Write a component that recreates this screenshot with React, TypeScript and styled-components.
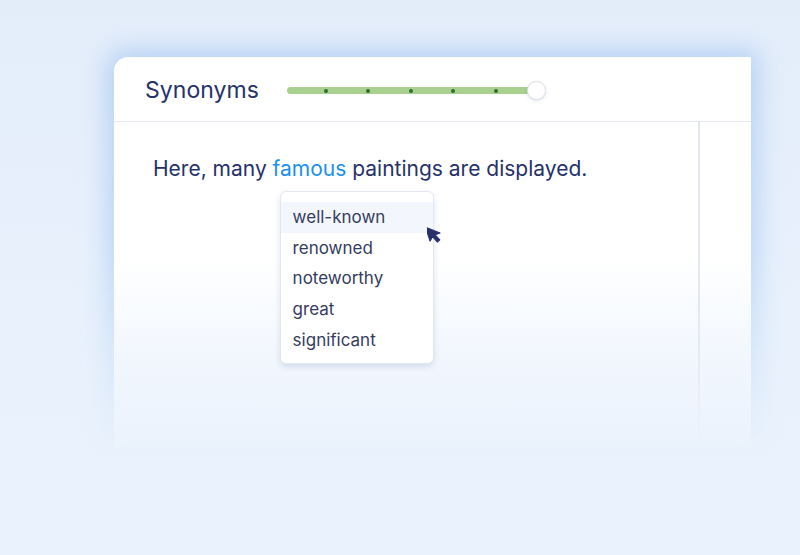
import React from "react";
import styled, { createGlobalStyle } from "styled-components";

const Global = createGlobalStyle`
  html, body { margin: 0; padding: 0; }
  body {
    background: linear-gradient(180deg, #e3edfa 0%, #e8f1fc 55%, #eaf3fd 100%);
    font-family: Inter, "Noto Sans", sans-serif;
    width: 800px;
    height: 555px;
    overflow: hidden;
  }
`;

const Page = styled.div`
  width: 800px;
  height: 555px;
  padding: 57px 0 0 114px;
  box-sizing: border-box;
`;

const Card = styled.div`
  position: relative;
  width: 637px;
  height: 390px;
  border-radius: 14px 1px 0 0;
  background: linear-gradient(180deg, #ffffff 0px, #ffffff 200px, #f2f7fe 300px, #eaf2fc 390px);
  display: flex;
  flex-direction: column;
  &::before {
    content: "";
    position: absolute;
    inset: -7px -7px 0 -7px;
    border-radius: 20px 6px 0 0;
    background: linear-gradient(
      180deg,
      rgba(165, 198, 242, 0.75) 0%,
      rgba(170, 202, 243, 0.7) 50%,
      rgba(200, 220, 248, 0) 100%
    );
    filter: blur(12px);
    pointer-events: none;
    z-index: -1;
  }
`;

const Header = styled.div`
  height: 65px;
  box-sizing: border-box;
  border-bottom: 1.5px solid #e4e7ef;
  display: flex;
  align-items: center;
  padding-left: 31px;
  gap: 28px;
`;

const Title = styled.h1`
  margin: 0;
  font-size: 23px;
  font-weight: 400;
  color: #26326a;
  letter-spacing: 0.05px;
  position: relative;
  top: 1px;
`;

const Track = styled.div`
  position: relative;
  width: 250px;
  height: 7px;
  border-radius: 4px;
  background: #a9d08e;
  display: flex;
  align-items: center;
  gap: 38.5px;
  padding-left: 37px;
  box-sizing: border-box;
  margin-top: 3px;
`;

const Dot = styled.span`
  flex: none;
  width: 4px;
  height: 4px;
  border-radius: 50%;
  background: #2c6e38;
`;

const Knob = styled.span`
  position: absolute;
  right: -9px;
  top: -6px;
  width: 19px;
  height: 19px;
  border-radius: 50%;
  background: #fff;
  border: 1px solid #dfe3ea;
  box-sizing: border-box;
  box-shadow: 0 1px 3px rgba(60, 80, 120, 0.18);
`;

const Body = styled.div`
  flex: 1;
  display: flex;
`;

const Main = styled.div`
  width: 586px;
  padding: 34px 0 0 39px;
  box-sizing: border-box;
  border-right: 2px solid;
  border-image: linear-gradient(180deg, #e2e6ee 0%, #e5e9f2 70%, rgba(230, 236, 245, 0) 100%) 1;
`;

const Side = styled.div`
  flex: 1;
`;

const Sentence = styled.p`
  margin: 0;
  font-size: 21px;
  line-height: 26px;
  color: #26326a;
`;

const Highlight = styled.span`
  position: relative;
  color: #1b8ff0;
`;

const Menu = styled.ul`
  position: absolute;
  left: 7px;
  top: 35px;
  width: 154px;
  margin: 0;
  padding: 10px 0 8px;
  list-style: none;
  background: #fff;
  border: 1px solid #e2e6ef;
  border-radius: 6px;
  box-sizing: border-box;
  box-shadow: 0 3px 6px rgba(90, 110, 150, 0.18);
  z-index: 2;
`;

const Item = styled.li<{ $active?: boolean }>`
  height: 30.7px;
  line-height: 30.7px;
  padding-left: 12px;
  font-size: 17px;
  color: #343c5e;
  background: ${(p) => (p.$active ? "#f3f7fd" : "transparent")};
  white-space: nowrap;
`;

const Pointer = styled.svg`
  position: absolute;
  left: 146px;
  top: 32px;
  width: 17px;
  height: 21px;
`;

const synonyms = ["well-known", "renowned", "noteworthy", "great", "significant"];
const dots = [1, 2, 3, 4, 5];

export default function App() {
  return (
    <>
      <Global />
      <Page>
        <Card>
          <Header>
            <Title>Synonyms</Title>
            <Track>
              {dots.map((d) => (
                <Dot key={d} />
              ))}
              <Knob />
            </Track>
          </Header>
          <Body>
            <Main>
              <Sentence>
                Here, many{" "}
                <Highlight>
                  famous
                  <Menu>
                    {synonyms.map((s, i) => (
                      <Item key={s} $active={i === 0}>
                        {s}
                      </Item>
                    ))}
                    <Pointer viewBox="0 0 16 20">
                      <path
                        d="M1 1 L1 15 L4.6 11.8 L7.4 18 L10.2 16.8 L7.5 10.8 L12.5 10.6 Z"
                        fill="#26306a"
                        stroke="#26306a"
                        strokeWidth="1"
                        strokeLinejoin="round"
                        transform="rotate(-18 6 10)"
                      />
                    </Pointer>
                  </Menu>
                </Highlight>{" "}
                paintings are displayed.
              </Sentence>
            </Main>
            <Side />
          </Body>
        </Card>
      </Page>
    </>
  );
}
